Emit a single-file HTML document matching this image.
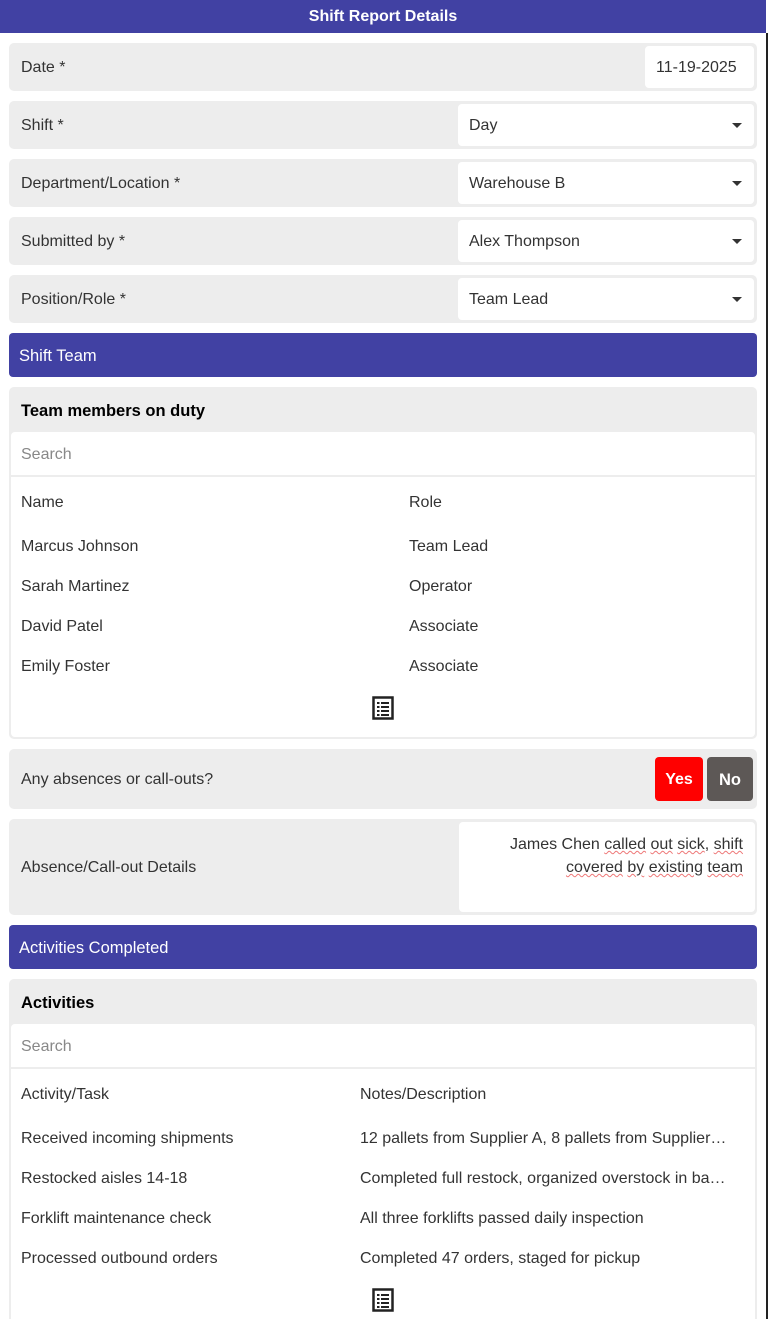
<!DOCTYPE html>
<html><head><meta charset="utf-8"><style>
*{box-sizing:border-box;margin:0;padding:0}
html,body{width:768px;height:1319px;overflow:hidden}
body{background:#fff;font-family:"Liberation Sans",sans-serif;font-size:16px;color:#333;position:relative}
.a{position:absolute}
.top{left:0;top:0;width:766px;height:33px;background:#4141a3;color:#fff;font-weight:bold;text-align:center;line-height:33px;font-size:16px}
.vl{left:766px;top:33px;width:2px;height:1286px;background:#222}
.row{left:9px;width:748px;height:48px;background:#ededed;border-radius:5px}
.lbl{left:12px;top:1px;line-height:48px}
.inp{background:#fff;border-radius:4px;top:3px;height:42px;right:3px;line-height:44px;padding-left:11px}
.car{position:absolute;right:12px;top:19px;width:0;height:0;border-left:5px solid transparent;border-right:5px solid transparent;border-top:5px solid #333}
.hdr{left:9px;width:748px;height:44px;background:#4141a3;color:#fff;border-radius:4px;line-height:46px;padding-left:10px;font-size:16.5px}
.pan{left:9px;width:748px;background:#ededed;border-radius:5px}
.pan .in{position:absolute;left:2px;right:2px;top:45px;bottom:2px;background:#fff;border-radius:4px}
.pt{position:absolute;left:12px;top:1px;line-height:46px;font-weight:bold;color:#000;font-size:16.5px}
.srch{position:absolute;left:0;right:0;top:0;height:45px;border-bottom:2px solid #ededed;line-height:46px;padding-left:10px;color:#888}
.c{position:absolute;line-height:20px;white-space:nowrap;margin-top:2px}
.u{text-decoration:underline wavy #e77;text-decoration-thickness:1px}
</style></head><body>
<div class="a top">Shift Report Details</div>
<div class="a vl"></div>

<div class="a row" style="top:43px"><div class="a lbl">Date *</div><div class="a inp" style="width:109px;padding-left:11px">11-19-2025</div></div>
<div class="a row" style="top:101px"><div class="a lbl">Shift *</div><div class="a inp" style="width:296px">Day<div class="car"></div></div></div>
<div class="a row" style="top:159px"><div class="a lbl">Department/Location *</div><div class="a inp" style="width:296px">Warehouse B<div class="car"></div></div></div>
<div class="a row" style="top:217px"><div class="a lbl">Submitted by *</div><div class="a inp" style="width:296px">Alex Thompson<div class="car"></div></div></div>
<div class="a row" style="top:275px"><div class="a lbl">Position/Role *</div><div class="a inp" style="width:296px">Team Lead<div class="car"></div></div></div>

<div class="a hdr" style="top:333px">Shift Team</div>

<div class="a pan" style="top:387px;height:352px">
<div class="pt">Team members on duty</div>
<div class="in">
<div class="srch">Search</div>
<div class="c" style="left:10px;top:59px">Name</div><div class="c" style="left:398px;top:59px">Role</div>
<div class="c" style="left:10px;top:103px">Marcus Johnson</div><div class="c" style="left:398px;top:103px">Team Lead</div>
<div class="c" style="left:10px;top:143px">Sarah Martinez</div><div class="c" style="left:398px;top:143px">Operator</div>
<div class="c" style="left:10px;top:183px">David Patel</div><div class="c" style="left:398px;top:183px">Associate</div>
<div class="c" style="left:10px;top:223px">Emily Foster</div><div class="c" style="left:398px;top:223px">Associate</div>
<svg class="a" style="left:361px;top:264px" width="22" height="24" viewBox="0 0 22 24"><rect x="1.5" y="1.5" width="19" height="21" fill="none" stroke="#222" stroke-width="2.5"/><g fill="#222"><rect x="5" y="6" width="2.5" height="2"/><rect x="9" y="6" width="8" height="2"/><rect x="5" y="10" width="2.5" height="2"/><rect x="9" y="10" width="8" height="2"/><rect x="5" y="14" width="2.5" height="2"/><rect x="9" y="14" width="8" height="2"/><rect x="5" y="18" width="2.5" height="2"/><rect x="9" y="18" width="8" height="2"/></g></svg>
</div></div>

<div class="a row" style="top:749px;height:60px"><div class="a lbl" style="line-height:60px">Any absences or call-outs?</div>
<div class="a" style="left:646px;top:8px;width:48px;height:44px;background:#f00;border-radius:4px;color:#fff;font-weight:bold;text-align:center;line-height:46px;font-size:16px">Yes</div>
<div class="a" style="left:698px;top:8px;width:46px;height:44px;background:#5d5856;border-radius:4px;color:#fff;font-weight:bold;text-align:center;line-height:46px;font-size:16.5px">No</div></div>

<div class="a row" style="top:819px;height:96px"><div class="a lbl" style="line-height:96px">Absence/Call-out Details</div>
<div class="a" style="left:450px;top:3px;width:296px;height:90px;background:#fff;border-radius:4px;text-align:right;padding:11px 12px 0 0;line-height:23px">James Chen <span class="u">called</span> <span class="u">out</span> <span class="u">sick</span>, <span class="u">shift</span><br><span class="u">covered</span> <span class="u">by</span> <span class="u">existing</span> <span class="u">team</span></div></div>

<div class="a hdr" style="top:925px">Activities Completed</div>

<div class="a pan" style="top:979px;height:360px">
<div class="pt">Activities</div>
<div class="in">
<div class="srch">Search</div>
<div class="c" style="left:10px;top:59px">Activity/Task</div><div class="c" style="left:349px;top:59px">Notes/Description</div>
<div class="c" style="left:10px;top:103px">Received incoming shipments</div><div class="c" style="left:349px;top:103px">12 pallets from Supplier A, 8 pallets from Supplier…</div>
<div class="c" style="left:10px;top:143px">Restocked aisles 14-18</div><div class="c" style="left:349px;top:143px">Completed full restock, organized overstock in ba…</div>
<div class="c" style="left:10px;top:183px">Forklift maintenance check</div><div class="c" style="left:349px;top:183px">All three forklifts passed daily inspection</div>
<div class="c" style="left:10px;top:223px">Processed outbound orders</div><div class="c" style="left:349px;top:223px">Completed 47 orders, staged for pickup</div>
<svg class="a" style="left:361px;top:264px" width="22" height="24" viewBox="0 0 22 24"><rect x="1.5" y="1.5" width="19" height="21" fill="none" stroke="#222" stroke-width="2.5"/><g fill="#222"><rect x="5" y="6" width="2.5" height="2"/><rect x="9" y="6" width="8" height="2"/><rect x="5" y="10" width="2.5" height="2"/><rect x="9" y="10" width="8" height="2"/><rect x="5" y="14" width="2.5" height="2"/><rect x="9" y="14" width="8" height="2"/><rect x="5" y="18" width="2.5" height="2"/><rect x="9" y="18" width="8" height="2"/></g></svg>
</div></div>
</body></html>
